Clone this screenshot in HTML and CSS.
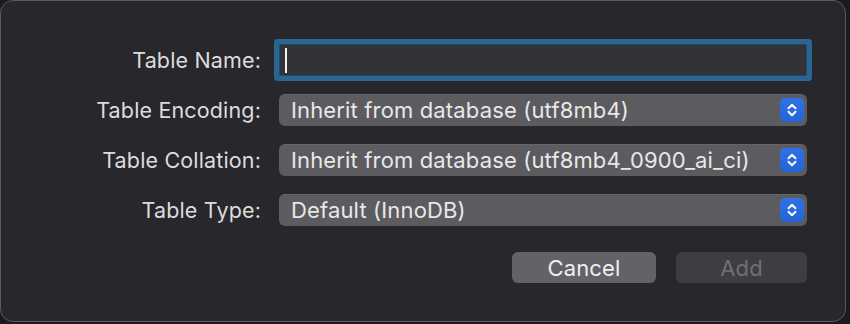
FILE: index.html
```html
<!DOCTYPE html>
<html>
<head>
<meta charset="utf-8">
<link rel="stylesheet" href="styles.css">
</head>
<body>
<div class="window">
  <div class="form">
    <label class="label">Table Name:</label>
    <div class="field"><span class="caret"></span></div>

    <label class="label">Table Encoding:</label>
    <div class="select"><span class="value">Inherit from database (utf8mb4)</span><span class="stepper"><svg viewBox="0 0 24 24" width="24" height="24"><path d="M8.5 10.2 L12 6.8 L15.5 10.2 M8.5 13.8 L12 17.2 L15.5 13.8" fill="none" stroke="#fff" stroke-width="2" stroke-linecap="round" stroke-linejoin="round"/></svg></span></div>

    <label class="label">Table Collation:</label>
    <div class="select"><span class="value">Inherit from database (utf8mb4_0900_ai_ci)</span><span class="stepper"><svg viewBox="0 0 24 24" width="24" height="24"><path d="M8.5 10.2 L12 6.8 L15.5 10.2 M8.5 13.8 L12 17.2 L15.5 13.8" fill="none" stroke="#fff" stroke-width="2" stroke-linecap="round" stroke-linejoin="round"/></svg></span></div>

    <label class="label">Table Type:</label>
    <div class="select"><span class="value">Default (InnoDB)</span><span class="stepper"><svg viewBox="0 0 24 24" width="24" height="24"><path d="M8.5 10.2 L12 6.8 L15.5 10.2 M8.5 13.8 L12 17.2 L15.5 13.8" fill="none" stroke="#fff" stroke-width="2" stroke-linecap="round" stroke-linejoin="round"/></svg></span></div>
  </div>
  <div class="buttons">
    <button class="btn cancel">Cancel</button>
    <button class="btn add" disabled>Add</button>
  </div>
</div>
</body>
</html>
```
FILE: styles.css
```css
html, body {
  margin: 0;
  padding: 0;
}
body {
  background: #1b1a1e;
  width: 850px;
  height: 324px;
  overflow: hidden;
  font-family: Inter, "Liberation Sans", Arial, sans-serif;
  font-size: 21.5px;
  letter-spacing: 0.15px;
}
.window {
  box-sizing: border-box;
  width: 846px;
  height: 322px;
  border: 1px solid #5a595d;
  border-radius: 13px;
  background: #28272c;
  padding: 43px 38px 0 0;
}
.form {
  display: grid;
  grid-template-columns: 1fr 528px;
  column-gap: 18px;
  row-gap: 18px;
}
.label {
  height: 32px;
  line-height: 32px;
  text-align: right;
  color: #dcdcdd;
  white-space: nowrap;
}
.field {
  box-sizing: border-box;
  height: 32px;
  background: #333237;
  border: 1px solid #1f4b70;
  box-shadow: 0 0 0 5px #2b6592;
  border-radius: 1px;
  display: flex;
  align-items: center;
  padding-left: 5px;
}
.caret {
  width: 2px;
  height: 25px;
  background: #f2f2f2;
}
.select {
  box-sizing: border-box;
  height: 32px;
  background: #5c5b60;
  border-radius: 6px;
  display: flex;
  align-items: center;
  padding: 0 3px 0 12px;
  box-shadow: inset 0 1px 0 rgba(255,255,255,0.06);
}
.value {
  color: #e8e8e9;
  white-space: nowrap;
  font-size: 22px;
}
.stepper {
  margin-left: auto;
  width: 24px;
  height: 24px;
  border-radius: 5px;
  background: linear-gradient(#2f72e6, #2563d6);
  display: flex;
}
.buttons {
  display: flex;
  justify-content: flex-end;
  gap: 20px;
  margin-top: 26px;
}
.btn {
  box-sizing: border-box;
  height: 31px;
  border: none;
  border-radius: 6px;
  font-family: Inter, "Liberation Sans", Arial, sans-serif;
  font-size: 22px;
  letter-spacing: 0.15px;
  padding: 0;
}
.cancel {
  width: 144px;
  background: #636267;
  color: #efefef;
}
.add {
  width: 131px;
  background: #3e3d42;
  color: #716f75;
}
```
